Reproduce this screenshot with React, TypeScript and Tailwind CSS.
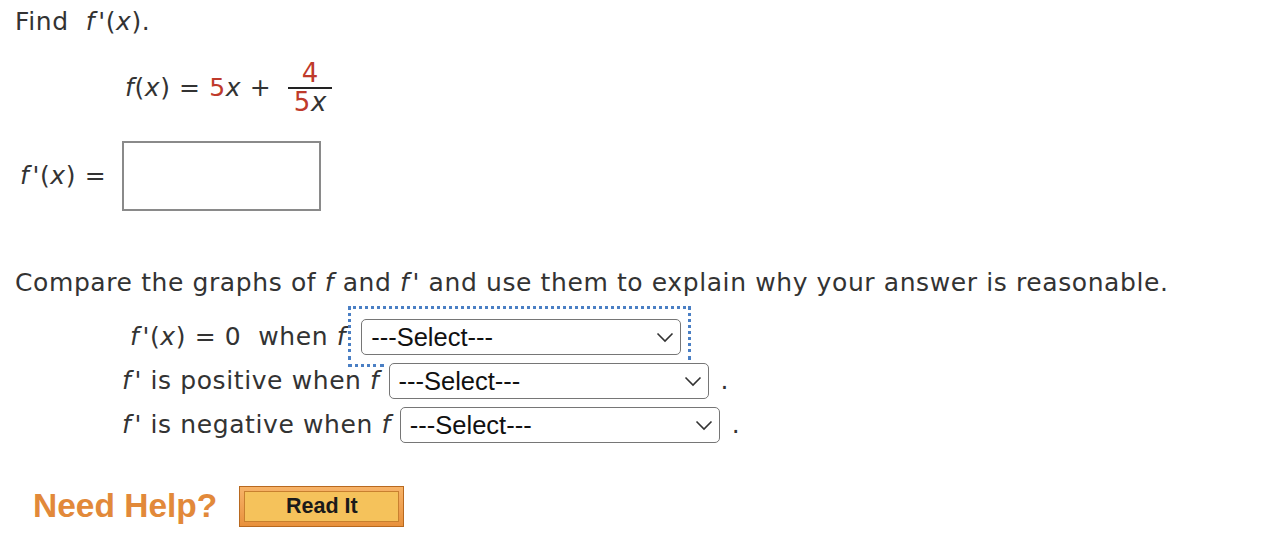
import React from "react";

const F = ({ children }: { children: React.ReactNode }) => <span className="italic">{children}</span>;

function Select() {
  return (
    <div
      className="relative flex h-[36px] w-[320px] items-center rounded-[5px] border-[1.5px] border-[#767676] bg-white pl-[9px] text-[25.5px] tracking-normal text-[#111]"
      style={{ fontFamily: '"Liberation Sans", Arial, sans-serif' }}
    >
      <span>---Select---</span>
      <svg className="absolute right-[6px] top-[12px]" width="18" height="11" viewBox="0 0 18 11">
        <path d="M1.5 1.5 L9 9 L16.5 1.5" fill="none" stroke="#333" strokeWidth="1.6" />
      </svg>
    </div>
  );
}

export default function App() {
  return (
    <div
      className="relative min-h-[560px] w-[1270px] bg-white text-[25px] tracking-[0.6px] text-[#333]"
      style={{ fontFamily: '"DejaVu Sans", Verdana, sans-serif' }}
    >
      {/* Find */}
      <div className="flex h-[44px] items-center pl-[15px]">
        Find&nbsp;&nbsp;<F>f</F>&#8202;'(<F>x</F>).
      </div>

      {/* f(x) formula */}
      <div className="mt-[15px] flex h-[58px] items-center pl-[125px]">
        <span>
          <F>f</F>(<F>x</F>) = <span className="text-[#bf3a2b]">5</span>
          <F>x</F> +&nbsp;&nbsp;
        </span>
        <div className="flex flex-col items-center">
          <div className="h-[27px] text-[26px] leading-[27px] text-[#bf3a2b]">4</div>
          <div className="h-[2px] w-[44px] bg-[#222]" />
          <div className="h-[27px] text-[26px] leading-[27px]">
            <span className="text-[#bf3a2b]">5</span>
            <F>x</F>
          </div>
        </div>
      </div>

      {/* f'(x) = box */}
      <div className="mt-[24px] flex h-[70px] items-center pl-[20px]">
        <span className="w-[102px]">
          <F>f</F>&#8202;'(<F>x</F>) =
        </span>
        <div className="h-[70px] w-[199px] border-2 border-[#8a8a8a] bg-white" />
      </div>

      {/* Compare */}
      <div className="mt-[50px] flex h-[44px] items-center pl-[15px]">
        Compare the graphs of&nbsp;<F>f</F>&nbsp;and&nbsp;<F>f</F>&#8202;'&nbsp;and use them to explain why your answer is reasonable.
      </div>

      {/* Rows */}
      <div className="mt-[10px] flex h-[44px] items-center pl-[130px]">
        <span>
          <F>f</F>&#8202;'(<F>x</F>) = 0&nbsp; when&nbsp;<F>f</F>
        </span>
        <div className="relative ml-[15px]">
          <Select />
          {/* dotted focus outline */}
          <div className="pointer-events-none absolute left-[-13px] top-[-13px] h-[54px] w-[343px] border-l-[3px] border-r-[3px] border-t-[3px] border-dotted border-[#4a7fc4]" />
          <div className="pointer-events-none absolute left-[-13px] top-[38px] h-[10px] w-[36px] border-b-[3px] border-l-[3px] border-dotted border-[#4a7fc4]" />
        </div>
      </div>
      <div className="flex h-[44px] items-center pl-[122px]">
        <span>
          <F>f</F>&#8202;' is positive when&nbsp;<F>f</F>
        </span>
        <div className="ml-[9px]">
          <Select />
        </div>
        <span className="ml-[12px]">.</span>
      </div>
      <div className="flex h-[44px] items-center pl-[122px]">
        <span>
          <F>f</F>&#8202;' is negative when&nbsp;<F>f</F>
        </span>
        <div className="ml-[9px]">
          <Select />
        </div>
        <span className="ml-[12px]">.</span>
      </div>

      {/* Need help */}
      <div
        className="mt-[37px] flex h-[44px] items-center pl-[33px] tracking-normal"
        style={{ fontFamily: '"Liberation Sans", Arial, sans-serif' }}
      >
        <span className="text-[33.5px] font-bold text-[#e2893a]">Need Help?</span>
        <div className="ml-[22px] flex h-[41px] w-[165px] items-center justify-center border border-[#b8691f] bg-gradient-to-b from-[#f7b368] to-[#e8913c] p-[4px]">
          <div className="flex h-full w-full items-center justify-center border border-[#c8802f] bg-[#f5c25b] text-[21.5px] font-bold text-[#1a1a1a]">
            Read It
          </div>
        </div>
      </div>
    </div>
  );
}
